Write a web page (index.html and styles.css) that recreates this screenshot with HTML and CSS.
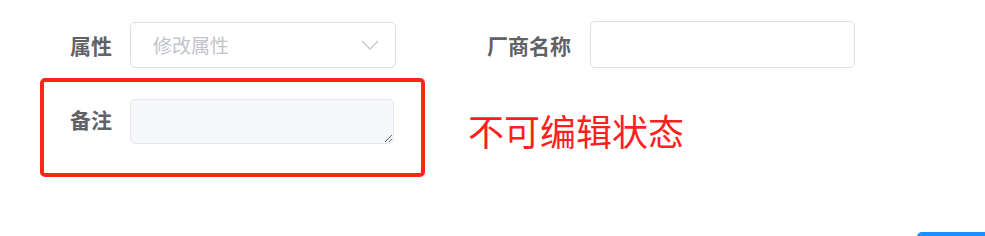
FILE: index.html
```html
<!DOCTYPE html>
<html lang="zh-CN">

<head>
    <meta charset="UTF-8">
    <title>编辑</title>
    <link rel="stylesheet" href="styles.css">
</head>

<body>
    <div class="form-row">
        <div class="form-item">
            <label class="form-label">属性</label>
            <div class="select">
                <span class="placeholder">修改属性</span>
                <svg class="arrow" width="18" height="10" viewBox="0 0 18 10">
                    <path d="M1 1 L9 9 L17 1" fill="none" stroke="#c0c4cc" stroke-width="1.3"/>
                </svg>
            </div>
        </div>
        <div class="form-item second">
            <label class="form-label wide">厂商名称</label>
            <input class="input" type="text">
        </div>
    </div>

    <div class="note-row">
        <div class="mark-box">
            <div class="form-item">
                <label class="form-label">备注</label>
                <textarea class="textarea" disabled></textarea>
            </div>
        </div>
        <span class="mark-text">不可编辑状态</span>
    </div>

    <div class="footer">
        <button class="btn-primary" aria-label="保存"></button>
    </div>
</body>

</html>
```

FILE: styles.css
```css
body {
    margin: 0;
    font-family: "Noto Sans CJK SC", "Noto Sans", sans-serif;
    background: #fff;
    overflow: hidden;
}

.form-row {
    display: flex;
    padding: 21px 0 0 70px;
}

.form-item {
    display: flex;
    align-items: center;
}

.form-item.second {
    margin-left: 91px;
}

.form-label {
    font-size: 21px;
    font-weight: bold;
    color: #606266;
    width: 42px;
    margin-right: 18px;
    white-space: nowrap;
}

.form-label.wide {
    width: 84px;
    margin-right: 19px;
}

.select {
    box-sizing: border-box;
    width: 266px;
    height: 46px;
    border: 1px solid #dcdfe6;
    border-radius: 5px;
    display: flex;
    align-items: center;
    justify-content: space-between;
    padding: 0 16px 0 22px;
}

.placeholder {
    font-size: 19px;
    color: #c0c4cc;
}

.input {
    box-sizing: border-box;
    width: 265px;
    height: 47px;
    border: 1px solid #dcdfe6;
    border-radius: 5px;
    outline: none;
}

.note-row {
    display: flex;
    align-items: center;
    margin-top: 10px;
    padding-left: 40px;
}

.mark-box {
    box-sizing: border-box;
    width: 385px;
    height: 99px;
    border: 4px solid #fe2519;
    border-radius: 5px;
    padding: 17px 0 0 26px;
}

.mark-box .form-label {
    margin-top: -2px;
    align-self: flex-start;
    line-height: 45px;
}

.textarea {
    box-sizing: border-box;
    width: 264px;
    height: 45px;
    background: #f5f7fa;
    border: 1px solid #e4e7ed;
    border-radius: 5px;
    resize: vertical;
    font-family: inherit;
}

.mark-text {
    margin-left: 43px;
    font-size: 36px;
    color: #fe1f1f;
    margin-top: 4px;
}

.footer {
    display: flex;
    justify-content: flex-end;
    margin-top: 55px;
}

.btn-primary {
    width: 80px;
    height: 40px;
    margin-right: -12px;
    border: none;
    border-radius: 5px;
    background: #1890ff;
}
```
